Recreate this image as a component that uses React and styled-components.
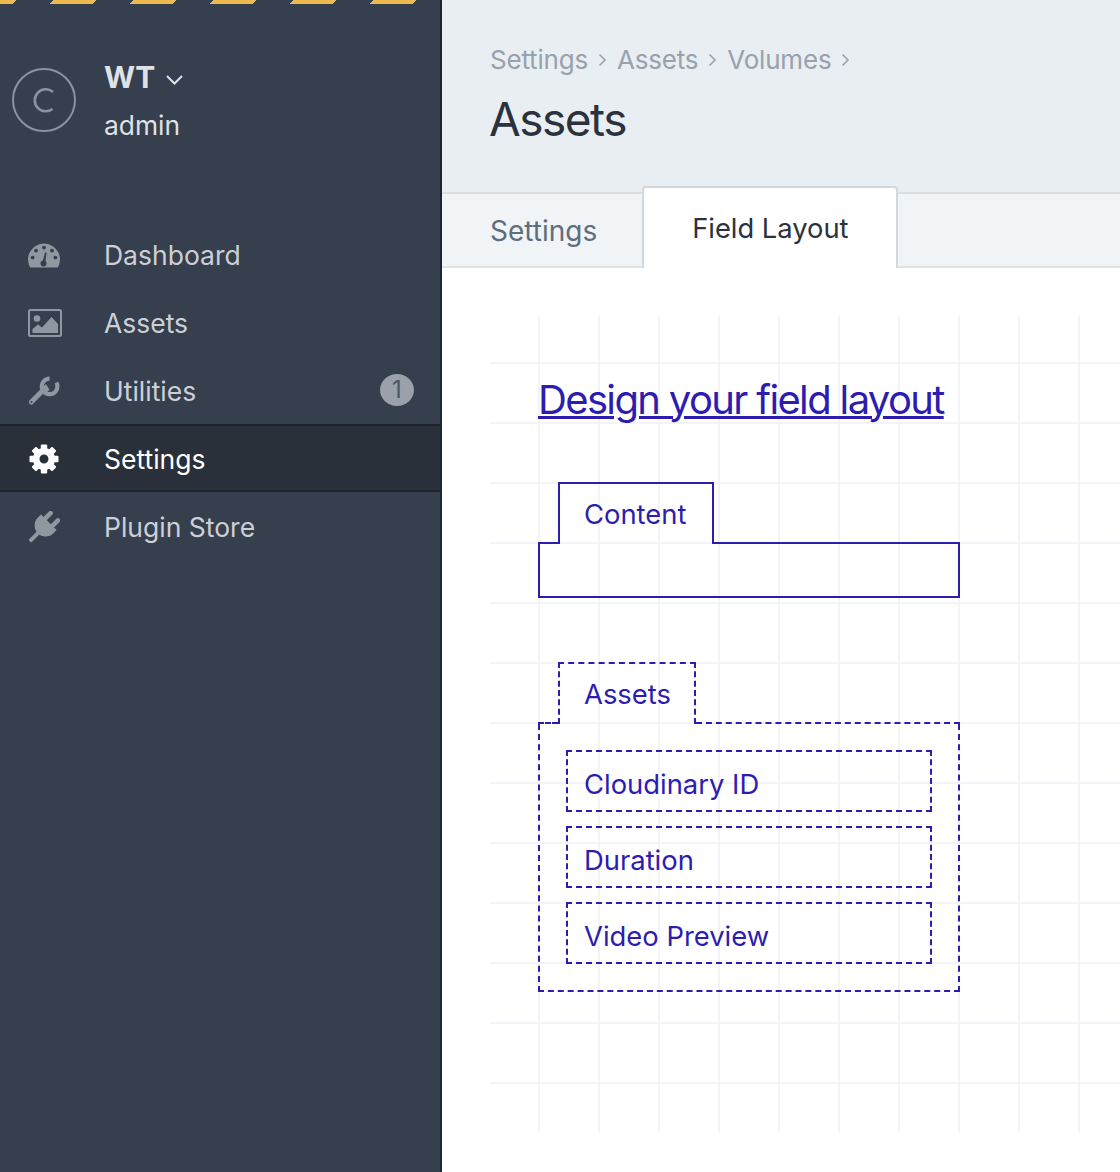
import React from 'react'
import styled, { createGlobalStyle, css } from 'styled-components'

const GlobalStyle = createGlobalStyle`
  html, body { margin: 0; padding: 0; height: 100%; background: #fff; }
  body { font-family: Inter, "Noto Sans", "Liberation Sans", sans-serif; overflow: hidden; }
  * { box-sizing: border-box; }
`

const Page = styled.div`
  display: grid;
  grid-template-columns: 442px 1fr;
  height: 100vh;
  overflow: hidden;
`

const Sidebar = styled.aside`
  background: #363f4e;
  border-right: 2px solid #1f252e;
  display: flex;
  flex-direction: column;
`

const Stripe = styled.div`
  height: 4px;
  background: repeating-linear-gradient(135deg, #efb94e 0, #efb94e 12px, #363f4e 12px, #363f4e 37.5px, #efb94e 37.5px, #efb94e 56.57px);
`

const Profile = styled.div`
  display: flex;
  align-items: center;
  gap: 29px;
  height: 80px;
  margin-top: 56px;
  padding-left: 12px;
`

const Logo = styled.svg`
  width: 64px;
  height: 64px;
  flex: none;
`

const ProfileText = styled.div`
  display: flex;
  flex-direction: column;
  gap: 13px;
  padding-top: 1px;
  margin-left: -1px;
  color: #dfe2e6;
`

const SiteName = styled.div`
  display: flex;
  align-items: center;
  gap: 11px;
  font-size: 30px;
  font-weight: 700;
  line-height: 36px;
`

const UserName = styled.div`
  font-size: 26.4px;
  line-height: 34px;
`

const Nav = styled.nav`
  margin-top: 80px;
  display: flex;
  flex-direction: column;
`

const NavRow = styled.a`
  height: 68px;
  padding-top: 2px;
  display: flex;
  align-items: center;
  font-size: 26.5px;
  color: #ccd0d6;
  ${p => p.$active && css`
    background: #29303a;
    border-top: 2px solid #1f242c;
    border-bottom: 2px solid #1f242c;
    color: #fff;
  `}
`

const IconSlot = styled.span`
  width: 104px;
  flex: none;
  padding-left: 28px;
  display: flex;
  align-items: center;
  color: ${p => (p.$active ? '#fff' : '#8f97a1')};
`

const Badge = styled.span`
  margin-left: auto;
  margin-right: 26px;
  margin-bottom: 2px;
  width: 34px;
  height: 32px;
  border-radius: 50%;
  background: #9aa1aa;
  color: #4d5865;
  font-size: 24px;
  line-height: 32px;
  text-align: center;
`

const Main = styled.main`
  display: flex;
  flex-direction: column;
  min-width: 0;
`

const Header = styled.header`
  height: 194px;
  background: #e9eef2;
  border-bottom: 2px solid #d9dee3;
  padding: 42px 0 0 48px;
`

const Crumbs = styled.div`
  display: flex;
  align-items: center;
  gap: 10px;
  font-size: 26px;
  letter-spacing: -0.2px;
  line-height: 36px;
  color: #98a2ad;
`

const Title = styled.h1`
  margin: 13px 0 0 -1px;
  font-size: 46px;
  font-weight: 400;
  letter-spacing: -1.5px;
  line-height: 56px;
  color: #29323d;
`

const TabBar = styled.div`
  height: 74px;
  background: #f0f4f7;
  border-bottom: 2px solid #dfe3e8;
  display: flex;
  align-items: flex-end;
`

const PageTab = styled.a`
  font-size: 28px;
  padding: 0 48px;
  color: #606d7b;
  height: 72px;
  line-height: 74px;
  ${p => p.$active && css`
    position: relative;
    font-size: 27.3px;
    height: 82px;
    margin-bottom: -2px;
    margin-left: -3px;
    line-height: 82px;
    background: #fff;
    color: #29323d;
    border: 2px solid #d3d8de;
    border-bottom: 0;
    border-radius: 4px 4px 0 0;
  `}
`

const Designer = styled.section`
  margin: 48px 0 0 48px;
  height: 816px;
  padding: 60px 0 0 48px;
  background-image:
    linear-gradient(to right, #f3f3fa 2px, transparent 2px),
    linear-gradient(to bottom, #f3f3fa 2px, transparent 2px);
  background-size: 60px 60px;
  background-position: 48px 0, 0 46px;
`

const DesignLink = styled.a`
  display: block;
  font-size: 40px;
  line-height: 48px;
  letter-spacing: -1.65px;
  color: #2d1cb0;
  text-decoration: underline;
  text-decoration-thickness: 3px;
`

const Group = styled.div`
  width: 422px;
  margin-top: ${p => p.$top}px;
  color: #2d1cb0;
  font-size: 27.4px;
`

const GroupHead = styled.div`
  display: flex;
  align-items: flex-end;
`

const lineStyle = p => (p.$dashed ? 'dashed' : 'solid')

const Notch = styled.span`
  width: 20px;
  flex: none;
  border-top: 2px ${lineStyle} #2d1cb0;
`

const Rest = styled.span`
  flex: 1;
  border-top: 2px ${lineStyle} #2d1cb0;
`

const GroupTab = styled.span`
  width: ${p => p.$width}px;
  flex: none;
  height: 62px;
  line-height: 60px;
  padding-left: 24px;
  border: 2px ${lineStyle} #2d1cb0;
  border-bottom: 0;
`

const GroupBody = styled.div`
  min-height: 54px;
  padding: 26px;
  border: 2px ${lineStyle} #2d1cb0;
  border-top: 0;
  display: flex;
  flex-direction: column;
  gap: 14px;
  &:empty { padding: 0; }
`

const FieldItem = styled.div`
  height: 62px;
  line-height: 64px;
  padding-left: 16px;
  border: 2px dashed #2d1cb0;
`

const Chevron = ({ size = 9, height = 14 }) => (
  <svg width={size} height={height} viewBox="0 0 9 14" fill="none" stroke="currentColor" strokeWidth="1.6">
    <path d="M1.5 1.5 7 7l-5.5 5.5" />
  </svg>
)

const DownArrow = () => (
  <svg width="17" height="10" viewBox="0 0 17 10" fill="none" stroke="currentColor" strokeWidth="2" style={{ marginTop: 5 }}>
    <path d="M1 1l7.5 7.5L16 1" />
  </svg>
)

const Gauge = () => (
  <svg width="32" height="25" viewBox="0 0 32 25">
    <path fill="currentColor" d="M2.1 24.5A16 16 0 1 1 29.9 24.5Z" />
    <g fill="#363f4e">
      <circle cx="16" cy="4.6" r="1.9" />
      <circle cx="8" cy="7.6" r="1.9" />
      <circle cx="24" cy="7.6" r="1.9" />
      <circle cx="4.6" cy="14.6" r="1.9" />
      <circle cx="27.4" cy="14.6" r="1.9" />
      <circle cx="15.5" cy="20.4" r="3" />
      <path d="M14.2 20 17 9.6h1.6L17.2 20.6Z" />
    </g>
  </svg>
)

const ImageIcon = () => (
  <svg width="34" height="28" viewBox="0 0 34 28">
    <rect x="1" y="1" width="32" height="26" rx="1.5" fill="none" stroke="currentColor" strokeWidth="2" />
    <circle cx="9" cy="9.5" r="3.3" fill="currentColor" />
    <path fill="currentColor" d="M4.5 24v-4l5.5-4.5 4 3L23.5 8 30 15v9Z" />
  </svg>
)

const Wrench = () => (
  <svg width="32" height="30" viewBox="0 0 32 30" fill="none" stroke="currentColor">
    <path strokeWidth="5" strokeLinecap="round" d="M3.4 26 14.5 14.8" />
    <path strokeWidth="4.2" d="M28.4 6.6A7.8 7.8 0 1 1 21.6 2.6" />
    <path strokeWidth="0" fill="currentColor" d="M13 13 18 8l3.5 6-4 3Z" />
    <circle cx="3.4" cy="26" r="1" fill="#363f4e" stroke="none" />
  </svg>
)

const Cog = () => (
  <svg width="30" height="30" viewBox="0 0 30 30" fill="currentColor" style={{ marginLeft: 1 }}>
    {[0, 45, 90, 135, 180, 225, 270, 315].map(a => (
      <rect key={a} x="11.8" y="0.5" width="6.4" height="7" rx="1" transform={`rotate(${a} 15 15)`} />
    ))}
    <circle cx="15" cy="15" r="7.8" fill="none" stroke="currentColor" strokeWidth="6.6" />
  </svg>
)

const Plug = () => (
  <svg width="33" height="33" viewBox="0 0 33 33" fill="currentColor" style={{ marginLeft: -1 }}>
    <g transform="rotate(45 16.5 16.5)">
      <rect x="9" y="-1" width="4.6" height="12" rx="2.3" />
      <rect x="19.4" y="-1" width="4.6" height="12" rx="2.3" />
      <path d="M5.5 9h22v4.5a11 11 0 0 1-22 0Z" />
      <rect x="14.5" y="22" width="4" height="14" rx="1" />
    </g>
  </svg>
)

const navItems = [
  { label: 'Dashboard', icon: <Gauge /> },
  { label: 'Assets', icon: <ImageIcon /> },
  { label: 'Utilities', icon: <Wrench />, badge: 1 },
  { label: 'Settings', icon: <Cog />, active: true },
  { label: 'Plugin Store', icon: <Plug /> },
]

const assetFields = ['Cloudinary ID', 'Duration', 'Video Preview']

function App() {
  return (
    <Page>
      <GlobalStyle />
      <Sidebar>
        <Stripe />
        <Profile>
          <Logo viewBox="0 0 64 64" fill="none" stroke="#8b939d" strokeWidth="2">
            <circle cx="32" cy="32" r="31" />
            <path strokeWidth="2.6" d="M41 24A11 11 0 1 0 40.5 41" />
          </Logo>
          <ProfileText>
            <SiteName>WT <DownArrow /></SiteName>
            <UserName>admin</UserName>
          </ProfileText>
        </Profile>
        <Nav>
          {navItems.map(item => (
            <NavRow key={item.label} $active={item.active}>
              <IconSlot $active={item.active}>{item.icon}</IconSlot>
              {item.label}
              {item.badge && <Badge>{item.badge}</Badge>}
            </NavRow>
          ))}
        </Nav>
      </Sidebar>
      <Main>
        <Header>
          <Crumbs>
            <span>Settings</span><Chevron />
            <span>Assets</span><Chevron />
            <span>Volumes</span><Chevron />
          </Crumbs>
          <Title>Assets</Title>
        </Header>
        <TabBar>
          <PageTab>Settings</PageTab>
          <PageTab $active>Field Layout</PageTab>
        </TabBar>
        <Designer>
          <DesignLink href="#">Design your field layout</DesignLink>
          <Group $top={58}>
            <GroupHead>
              <Notch />
              <GroupTab $width={156}>Content</GroupTab>
              <Rest />
            </GroupHead>
            <GroupBody />
          </Group>
          <Group $top={64}>
            <GroupHead>
              <Notch $dashed />
              <GroupTab $dashed $width={138}>Assets</GroupTab>
              <Rest $dashed />
            </GroupHead>
            <GroupBody $dashed>
              {assetFields.map(name => <FieldItem key={name}>{name}</FieldItem>)}
            </GroupBody>
          </Group>
        </Designer>
      </Main>
    </Page>
  )
}

export default App
